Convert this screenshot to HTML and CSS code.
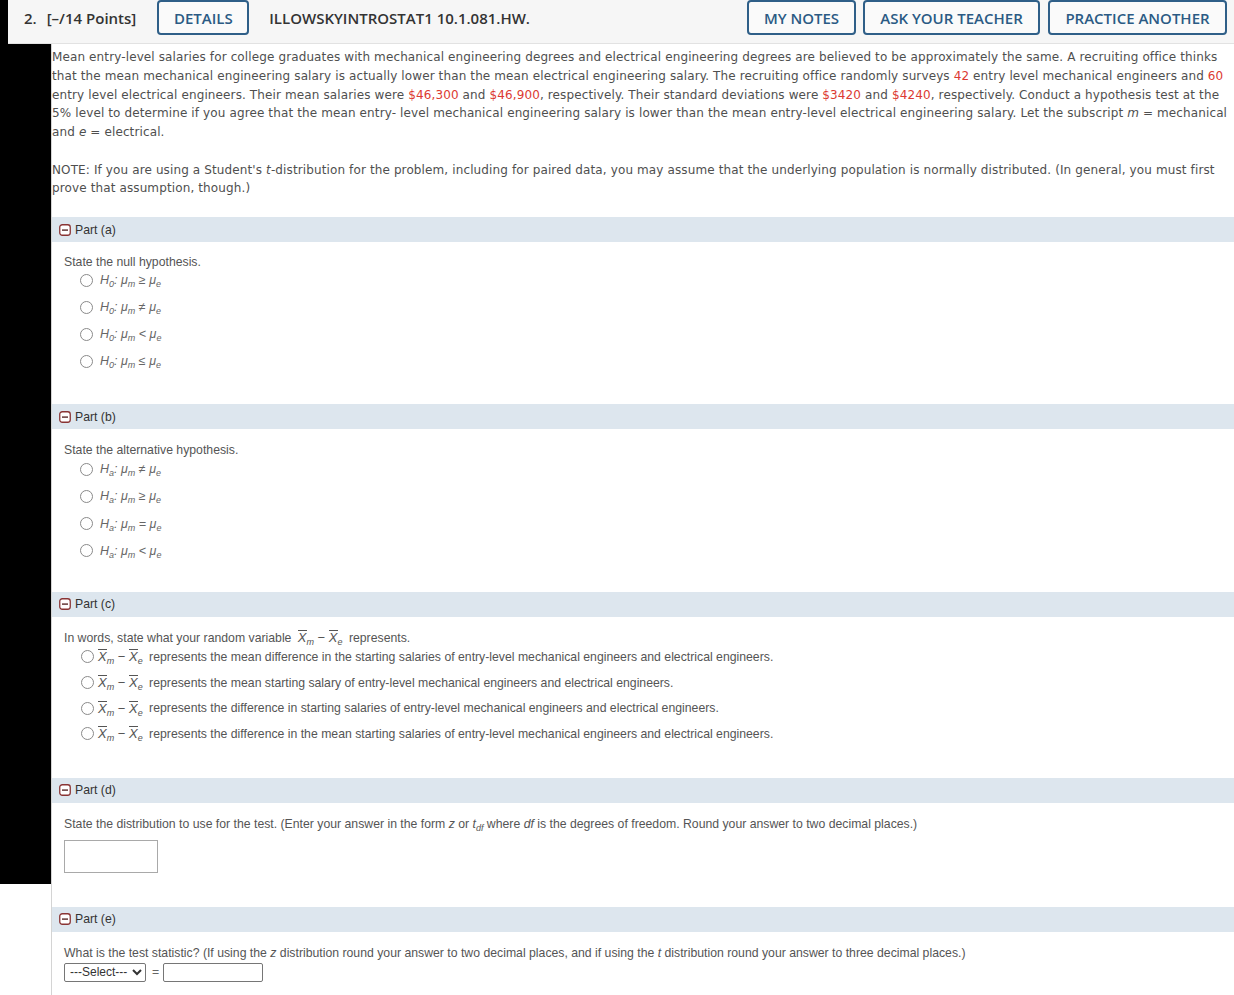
FILE: index.html
```html
<!DOCTYPE html>
<html>
<head>
<meta charset="utf-8">
<title>Question 2</title>
<link rel="stylesheet" href="styles.css">
</head>
<body>
<div class="page">
  <div class="topbar">
    <div class="edge"></div>
    <header class="qhead">
      <span class="qnum"><span class="qn">2.</span>[–/14 Points]</span>
      <button class="btn details">DETAILS</button>
      <span class="qid">ILLOWSKYINTROSTAT1 10.1.081.HW.</span>
      <span class="spacer"></span>
      <button class="btn b1">MY NOTES</button>
      <button class="btn b2">ASK YOUR TEACHER</button>
      <button class="btn b3">PRACTICE ANOTHER</button>
    </header>
  </div>
  <div class="main">
    <div class="side"></div>
    <div class="content">
      <div class="stem">
        <div class="ln">Mean entry-level salaries for college graduates with mechanical engineering degrees and electrical engineering degrees are believed to be approximately the same. A recruiting office thinks</div>
        <div class="ln">that the mean mechanical engineering salary is actually lower than the mean electrical engineering salary. The recruiting office randomly surveys <span class="red">42</span> entry level mechanical engineers and <span class="red">60</span></div>
        <div class="ln">entry level electrical engineers. Their mean salaries were <span class="red">$46,300</span> and <span class="red">$46,900</span>, respectively. Their standard deviations were <span class="red">$3420</span> and <span class="red">$4240</span>, respectively. Conduct a hypothesis test at the</div>
        <div class="ln">5% level to determine if you agree that the mean entry- level mechanical engineering salary is lower than the mean entry-level electrical engineering salary. Let the subscript <i>m</i> = mechanical</div>
        <div class="ln">and <i>e</i> = electrical.</div>
        <div class="ln blank">&nbsp;</div>
        <div class="ln">NOTE: If you are using a Student's <i>t</i>-distribution for the problem, including for paired data, you may assume that the underlying population is normally distributed. (In general, you must first</div>
        <div class="ln">prove that assumption, though.)</div>
      </div>

      <section class="part">
        <div class="band"><svg class="tog" width="12" height="12" viewBox="0 0 12 12"><rect x="0.75" y="0.75" width="10.5" height="10.5" rx="2.5" fill="#fff" stroke="#8a3434" stroke-width="1.3"/><rect x="3" y="5.4" width="6" height="1.4" fill="#5a2a2a"/></svg><span>Part (a)</span></div>
        <div class="pbody pa">
          <div class="q">State the null hypothesis.</div>
          <div class="opts">
            <div class="opt"><span class="radio"></span><span class="m"><i>H</i><sub>0</sub>: <i>μ</i><sub><i>m</i></sub> ≥ <i>μ</i><sub><i>e</i></sub></span></div>
            <div class="opt"><span class="radio"></span><span class="m"><i>H</i><sub>0</sub>: <i>μ</i><sub><i>m</i></sub> ≠ <i>μ</i><sub><i>e</i></sub></span></div>
            <div class="opt"><span class="radio"></span><span class="m"><i>H</i><sub>0</sub>: <i>μ</i><sub><i>m</i></sub> &lt; <i>μ</i><sub><i>e</i></sub></span></div>
            <div class="opt"><span class="radio"></span><span class="m"><i>H</i><sub>0</sub>: <i>μ</i><sub><i>m</i></sub> ≤ <i>μ</i><sub><i>e</i></sub></span></div>
          </div>
        </div>
      </section>

      <section class="part">
        <div class="band"><svg class="tog" width="12" height="12" viewBox="0 0 12 12"><rect x="0.75" y="0.75" width="10.5" height="10.5" rx="2.5" fill="#fff" stroke="#8a3434" stroke-width="1.3"/><rect x="3" y="5.4" width="6" height="1.4" fill="#5a2a2a"/></svg><span>Part (b)</span></div>
        <div class="pbody pb">
          <div class="q">State the alternative hypothesis.</div>
          <div class="opts">
            <div class="opt"><span class="radio"></span><span class="m"><i>H</i><sub><i>a</i></sub>: <i>μ</i><sub><i>m</i></sub> ≠ <i>μ</i><sub><i>e</i></sub></span></div>
            <div class="opt"><span class="radio"></span><span class="m"><i>H</i><sub><i>a</i></sub>: <i>μ</i><sub><i>m</i></sub> ≥ <i>μ</i><sub><i>e</i></sub></span></div>
            <div class="opt"><span class="radio"></span><span class="m"><i>H</i><sub><i>a</i></sub>: <i>μ</i><sub><i>m</i></sub> = <i>μ</i><sub><i>e</i></sub></span></div>
            <div class="opt"><span class="radio"></span><span class="m"><i>H</i><sub><i>a</i></sub>: <i>μ</i><sub><i>m</i></sub> &lt; <i>μ</i><sub><i>e</i></sub></span></div>
          </div>
        </div>
      </section>

      <section class="part">
        <div class="band"><svg class="tog" width="12" height="12" viewBox="0 0 12 12"><rect x="0.75" y="0.75" width="10.5" height="10.5" rx="2.5" fill="#fff" stroke="#8a3434" stroke-width="1.3"/><rect x="3" y="5.4" width="6" height="1.4" fill="#5a2a2a"/></svg><span>Part (c)</span></div>
        <div class="pbody pc">
          <div class="q">In words, state what your random variable <span class="xv"><span class="xb">X</span><sub><i>m</i></sub> − <span class="xb">X</span><sub><i>e</i></sub></span> represents.</div>
          <div class="opts tight">
            <div class="opt"><span class="radio"></span><span class="xv"><span class="xb">X</span><sub><i>m</i></sub> − <span class="xb">X</span><sub><i>e</i></sub></span> represents the mean difference in the starting salaries of entry-level mechanical engineers and electrical engineers.</div>
            <div class="opt"><span class="radio"></span><span class="xv"><span class="xb">X</span><sub><i>m</i></sub> − <span class="xb">X</span><sub><i>e</i></sub></span> represents the mean starting salary of entry-level mechanical engineers and electrical engineers.</div>
            <div class="opt"><span class="radio"></span><span class="xv"><span class="xb">X</span><sub><i>m</i></sub> − <span class="xb">X</span><sub><i>e</i></sub></span> represents the difference in starting salaries of entry-level mechanical engineers and electrical engineers.</div>
            <div class="opt"><span class="radio"></span><span class="xv"><span class="xb">X</span><sub><i>m</i></sub> − <span class="xb">X</span><sub><i>e</i></sub></span> represents the difference in the mean starting salaries of entry-level mechanical engineers and electrical engineers.</div>
          </div>
        </div>
      </section>

      <section class="part">
        <div class="band"><svg class="tog" width="12" height="12" viewBox="0 0 12 12"><rect x="0.75" y="0.75" width="10.5" height="10.5" rx="2.5" fill="#fff" stroke="#8a3434" stroke-width="1.3"/><rect x="3" y="5.4" width="6" height="1.4" fill="#5a2a2a"/></svg><span>Part (d)</span></div>
        <div class="pbody pd">
          <div class="q">State the distribution to use for the test. (Enter your answer in the form <i>z</i> or <i>t</i><sub><i>df</i></sub> where <i>df</i> is the degrees of freedom. Round your answer to two decimal places.)</div>
          <input class="bigbox" type="text">
        </div>
      </section>

      <section class="part">
        <div class="band"><svg class="tog" width="12" height="12" viewBox="0 0 12 12"><rect x="0.75" y="0.75" width="10.5" height="10.5" rx="2.5" fill="#fff" stroke="#8a3434" stroke-width="1.3"/><rect x="3" y="5.4" width="6" height="1.4" fill="#5a2a2a"/></svg><span>Part (e)</span></div>
        <div class="pbody pe">
          <div class="q">What is the test statistic? (If using the <i>z</i> distribution round your answer to two decimal places, and if using the <i>t</i> distribution round your answer to three decimal places.)</div>
          <div class="ansrow">
            <select class="sel"><option>---Select---</option></select>
            <span class="eq">=</span>
            <input class="smallbox" type="text">
          </div>
        </div>
      </section>
    </div>
  </div>
</div>
</body>
</html>
```

FILE: styles.css
```css
html, body {
  margin: 0;
  padding: 0;
  background: #ffffff;
  overflow: hidden;
}

.page {
  width: 1234px;
  display: flex;
  flex-direction: column;
}

.topbar {
  display: flex;
  height: 44px;
}

.edge {
  width: 8px;
  background: #000;
}

.qhead {
  flex: 1;
  display: flex;
  align-items: center;
  height: 35px;
  padding: 0 7px 8px 16px;
  background: #f6f6f6;
  border-bottom: 1px solid #e2e2e2;
  font-family: "Open Sans", "Liberation Sans", sans-serif;
  font-size: 15px;
  color: #333;
}

.qnum {
  font-weight: 600;
  white-space: nowrap;
}

.qn {
  margin-right: 10px;
}

.qid {
  font-weight: 600;
  margin-left: 20px;
  white-space: nowrap;
}

.spacer {
  flex: 1;
}

.btn {
  height: 35px;
  margin: 0;
  padding: 0;
  border: 2px solid #2f5f88;
  border-radius: 4px;
  background: #fafafa;
  color: #2b5a84;
  font-family: "Open Sans", "Liberation Sans", sans-serif;
  font-size: 15px;
  font-weight: 600;
  white-space: nowrap;
}

.details {
  margin-left: 21px;
  width: 92px;
}

.b1 { width: 109px; }
.b2 { width: 177px; margin-left: 7px; }
.b3 { width: 179px; margin-left: 8px; }

.main {
  display: flex;
  align-items: flex-start;
}

.side {
  width: 51px;
  height: 840px;
  background: #000;
  flex: none;
}

.content {
  flex: 1;
  min-width: 0;
  min-height: 960px;
  border-left: 1px solid #d4d4d4;
  overflow: hidden;
}

.stem {
  padding-top: 4px;
  padding-bottom: 19px;
  font-family: "DejaVu Sans", sans-serif;
  font-size: 12px;
  letter-spacing: 0.12px;
  line-height: 18.75px;
  color: #4f4f4f;
}

.ln {
  white-space: nowrap;
}

.red {
  color: #dc3a32;
}

.part {
  font-family: "Liberation Sans", Arial, sans-serif;
  font-size: 12.25px;
  color: #555;
}

.band {
  height: 25px;
  display: flex;
  align-items: center;
  padding-left: 7px;
  background: #dde6ee;
  color: #333;
}

.tog {
  margin-right: 4px;
  flex: none;
}

.pbody {
  padding: 13px 12px 34px 12px;
}

.pa {
  padding-top: 12px;
  padding-bottom: 33px;
}

.pb {
  padding-bottom: 31px;
}

.q {
  line-height: 16px;
  white-space: nowrap;
}

.opts {
  display: flex;
  flex-direction: column;
  gap: 7px;
  padding-left: 16px;
}

.pb .opts {
  margin-top: 1px;
  gap: 7.3px;
}

.opts.tight {
  margin-top: 1px;
  gap: 5.7px;
  padding-left: 17px;
}

.opt {
  height: 20px;
  display: flex;
  align-items: center;
  white-space: pre;
}

.radio {
  width: 11px;
  height: 11px;
  border: 1px solid #8a8a8a;
  border-radius: 50%;
  background: #fff;
  margin-right: 7px;
  flex: none;
}

.tight .radio {
  margin-right: 4px;
}

.m {
  font-size: 12.5px;
  font-style: italic;
  color: #666;
}

.m i {
  font-style: italic;
}

sub {
  font-size: 9px;
  vertical-align: -3px;
  line-height: 0;
}

.xv {
  font-size: 13px;
  color: #555;
  margin-right: 3px;
}

.q .xv {
  margin-left: 3px;
}

.xb {
  display: inline-block;
  font-style: italic;
  border-top: 1px solid #555;
  line-height: 11px;
  padding-top: 1px;
}

.bigbox {
  display: block;
  margin-top: 8px;
  width: 94px;
  height: 33px;
  box-sizing: border-box;
  border: 1px solid #a9a9a9;
  background: #fff;
}

.ansrow {
  display: flex;
  align-items: center;
  margin-top: 2px;
}

.sel {
  width: 82px;
  height: 19px;
  box-sizing: border-box;
  font-family: "Liberation Sans", Arial, sans-serif;
  font-size: 12px;
  color: #333;
  border: 1px solid #767676;
  border-radius: 2px;
  background: #fff;
  padding: 0 0 0 1px;
}

.eq {
  margin: 0 4px 0 6px;
  color: #666;
}

.smallbox {
  width: 100px;
  height: 19px;
  box-sizing: border-box;
  border: 1px solid #767676;
  border-radius: 2px;
  background: #fff;
}
```
